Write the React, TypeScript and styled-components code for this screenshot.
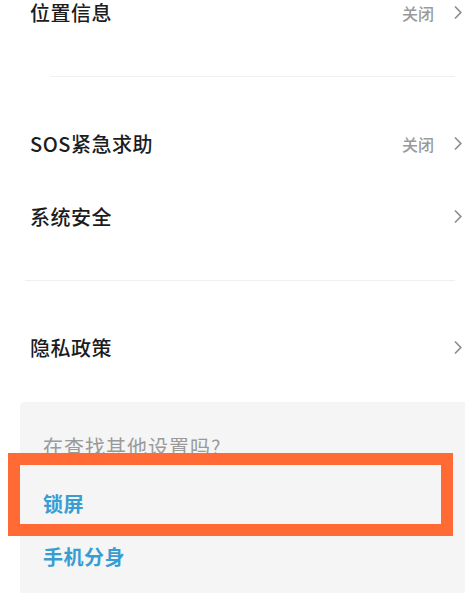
import React from "react";
import styled, { createGlobalStyle } from "styled-components";

const GlobalStyle = createGlobalStyle`
  html, body {
    margin: 0;
    padding: 0;
    background: #ffffff;
    overflow: hidden;
  }
  body {
    font-family: "Noto Sans CJK SC", "Noto Sans", sans-serif;
  }
`;

const Screen = styled.div`
  width: 465px;
  height: 593px;
  overflow: hidden;
  background: #ffffff;
`;

/* the list is scrolled a little, so the first row is cut at the top */
const ScrollBody = styled.div`
  margin-top: -24px;
  display: flex;
  flex-direction: column;
`;

const Group = styled.div`
  display: flex;
  flex-direction: column;
`;

const Row = styled.div`
  height: 73px;
  display: flex;
  align-items: center;
  padding: 0 3px 0 30px;
`;

const Label = styled.span`
  flex: 1;
  font-size: 20px;
  font-weight: 500;
  color: #1c1c1c;
  letter-spacing: 0.5px;
`;

const Value = styled.span`
  font-size: 16px;
  font-weight: 500;
  color: #9a9a9a;
  margin-right: 20px;
`;

const Chevron = styled.svg`
  width: 8px;
  height: 15px;
  flex-shrink: 0;
`;

const Divider = styled.div<{ $left: number }>`
  height: 1px;
  background: #f0f0f0;
  margin: 27px 10px 30px ${(p) => p.$left}px;
`;

const Panel = styled.div`
  margin: 18px 0 0 20px;
  background: #f5f5f5;
  border-top-left-radius: 4px;
  padding: 31px 0 40px 23px;
  display: flex;
  flex-direction: column;
`;

const PanelTitle = styled.div`
  font-size: 20px;
  color: #9a9a9a;
  letter-spacing: 1px;
  line-height: 27px;
  margin-bottom: 17px;
`;

const LinkItem = styled.div`
  position: relative;
  height: 53px;
  display: flex;
  align-items: center;
  font-size: 20px;
  font-weight: 700;
  color: #379dd2;
  letter-spacing: 0.5px;
`;

const Highlight = styled.div`
  position: absolute;
  left: -35px;
  right: 12px;
  top: -24px;
  bottom: -6px;
  border: 12px solid #ff6a35;
  pointer-events: none;
`;

const Arrow = () => (
  <Chevron viewBox="0 0 8 15">
    <path d="M1 1.5 L6.8 7.5 L1 13.5" fill="none" stroke="#8e8e8e" strokeWidth="1.7" />
  </Chevron>
);

type Item = { label: string; value?: string };

const ListRow = ({ label, value }: Item) => (
  <Row>
    <Label>{label}</Label>
    {value && <Value>{value}</Value>}
    <Arrow />
  </Row>
);

export default function App() {
  return (
    <Screen>
      <GlobalStyle />
      <ScrollBody>
        <Group>
          <ListRow label="位置信息" value="关闭" />
        </Group>
        <Divider $left={50} />
        <Group>
          <ListRow label="SOS紧急求助" value="关闭" />
          <ListRow label="系统安全" />
        </Group>
        <Divider $left={25} />
        <Group>
          <ListRow label="隐私政策" />
        </Group>
        <Panel>
          <PanelTitle>在查找其他设置吗?</PanelTitle>
          <LinkItem>
            锁屏
            <Highlight />
          </LinkItem>
          <LinkItem>手机分身</LinkItem>
        </Panel>
      </ScrollBody>
    </Screen>
  );
}
